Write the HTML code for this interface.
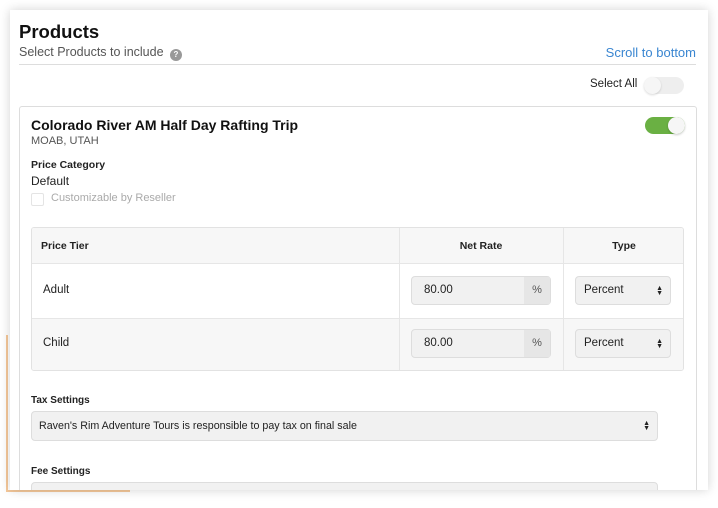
<!DOCTYPE html>
<html><head><style>
*{box-sizing:border-box;margin:0;padding:0}
body{width:718px;height:508px;background:#fff;font-family:"Liberation Sans",sans-serif;color:#222;position:relative;overflow:hidden}
.panel{position:absolute;left:10px;top:10px;width:698px;height:480px;background:#fff;box-shadow:0 0 10px rgba(0,0,0,.18);overflow:hidden}
.abs{position:absolute}
.card{position:absolute;left:9px;top:96px;width:678px;height:420px;border:1px solid #ddd;border-radius:3px}
.tog{position:absolute;width:40px;height:17px;border-radius:9px}
.sel{position:absolute;background:#f1f1f1;border:1px solid #ddd;border-radius:4px;font-size:11.5px;color:#222;line-height:27px;padding-top:0!important;padding-bottom:0!important}
.arr{position:absolute;right:7px;top:50%;transform:translateY(-50%);font-size:7px;line-height:5px;color:#222}
</style></head><body>
<div style="position:absolute;left:6px;top:335px;width:2px;height:157px;background:#f5c89a"></div>
<div style="position:absolute;left:8px;top:490px;width:122px;height:2px;background:#f5c89a"></div>
<div class="panel">
 <div class="abs" style="left:9px;top:11px;font-size:18.5px;font-weight:bold;color:#111">Products</div>
 <div class="abs" style="left:9px;top:35px;font-size:12.5px;color:#555">Select Products to include <span style="display:inline-block;width:12px;height:12px;border-radius:6px;background:#999;color:#fff;font-size:8px;text-align:center;line-height:12px;vertical-align:-1px;margin-left:3px;font-weight:bold">?</span></div>
 <div class="abs" style="right:12px;top:35px;font-size:13px;color:#3a86d1">Scroll to bottom</div>
 <div class="abs" style="left:9px;top:54px;width:677px;height:1px;background:#ddd"></div>
 <div class="abs" style="left:580px;top:68px;font-size:11.5px;color:#222">Select All</div>
 <div class="tog" style="left:634px;top:67px;background:#eee"><div style="position:absolute;left:0;top:0;width:17px;height:17px;border-radius:9px;background:#f6f6f6;box-shadow:0 1px 2px rgba(0,0,0,.15)"></div></div>
 <div class="card">
  <div class="tog" style="left:625px;top:10px;background:#6ab043"><div style="position:absolute;right:0;top:0;width:17px;height:17px;border-radius:9px;background:#f6f6f6;box-shadow:0 1px 2px rgba(0,0,0,.2)"></div></div>
  <div class="abs" style="left:11px;top:10px;font-size:14px;font-weight:bold;color:#111">Colorado River AM Half Day Rafting Trip</div>
  <div class="abs" style="left:11px;top:28px;font-size:11px;color:#555">MOAB, UTAH</div>
  <div class="abs" style="left:11px;top:52px;font-size:10.5px;font-weight:bold">Price Category</div>
  <div class="abs" style="left:11px;top:67px;font-size:12px">Default</div>
  <div class="abs" style="left:11px;top:86px;width:13px;height:13px;border:1px solid #e4e4e4;border-radius:2px"></div>
  <div class="abs" style="left:31px;top:85px;font-size:11px;color:#aaa">Customizable by Reseller</div>
  <div class="abs" style="left:11px;top:120px;width:653px;height:144px;border:1px solid #e2e2e2;border-radius:3px;overflow:hidden">
   <div class="abs" style="left:0;top:0;width:653px;height:36px;background:#f7f7f7;border-bottom:1px solid #e6e6e6"></div>
   <div class="abs" style="left:0;top:90px;width:653px;height:54px;background:#f7f7f7;border-top:1px solid #e6e6e6"></div>
   <div class="abs" style="left:367px;top:0;width:1px;height:144px;background:#e6e6e6"></div>
   <div class="abs" style="left:531px;top:0;width:1px;height:144px;background:#e6e6e6"></div>
   <div class="abs" style="left:9px;top:12px;font-size:10.5px;font-weight:bold">Price Tier</div>
   <div class="abs" style="left:367px;width:164px;top:12px;font-size:10.5px;font-weight:bold;text-align:center">Net Rate</div>
   <div class="abs" style="left:531px;width:122px;top:12px;font-size:10.5px;font-weight:bold;text-align:center">Type</div>
   <div class="abs" style="left:11px;top:56px;font-size:11.5px">Adult</div>
   <div class="abs" style="left:11px;top:109px;font-size:11.5px">Child</div>
   <div class="sel" style="left:379px;top:48px;width:140px;height:29px;padding:0 12px">80.00<div style="position:absolute;right:0;top:0;width:26px;height:27px;background:#e6e6e6;font-size:11px;text-align:center;line-height:27px;color:#555">%</div></div>
   <div class="sel" style="left:379px;top:101px;width:140px;height:29px;padding:0 12px">80.00<div style="position:absolute;right:0;top:0;width:26px;height:27px;background:#e6e6e6;font-size:11px;text-align:center;line-height:27px;color:#555">%</div></div>
   <div class="sel" style="left:543px;top:48px;width:96px;height:29px;padding:0 8px">Percent<div class="arr">▲<br>▼</div></div>
   <div class="sel" style="left:543px;top:101px;width:96px;height:29px;padding:0 8px">Percent<div class="arr">▲<br>▼</div></div>
  </div>
  <div class="abs" style="left:11px;top:288px;font-size:10px;font-weight:bold">Tax Settings</div>
  <div class="sel" style="left:11px;top:304px;width:627px;height:30px;padding:0 7px;font-size:10.7px;line-height:28px">Raven's Rim Adventure Tours is responsible to pay tax on final sale<div class="arr">▲<br>▼</div></div>
  <div class="abs" style="left:11px;top:359px;font-size:10px;font-weight:bold">Fee Settings</div>
  <div class="sel" style="left:11px;top:375px;width:627px;height:30px"></div>
 </div>
</div>
</body></html>
